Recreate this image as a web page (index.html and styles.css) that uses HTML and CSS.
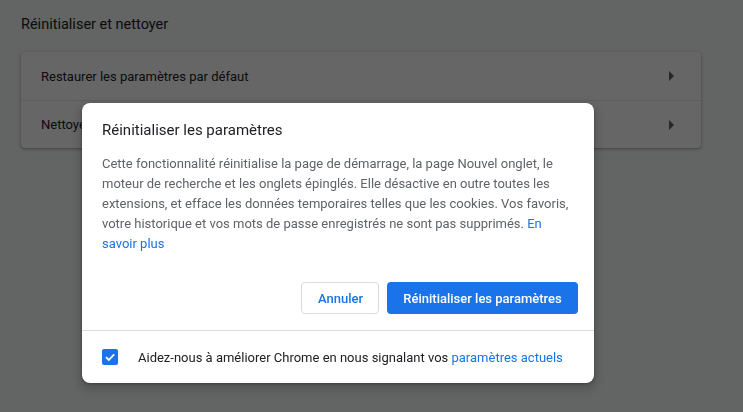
FILE: index.html
```html
<!DOCTYPE html>
<html lang="fr">
<head>
<meta charset="utf-8">
<link rel="stylesheet" href="styles.css">
</head>
<body>
<div class="page">
  <h2 class="section-title">Réinitialiser et nettoyer</h2>
  <div class="card">
    <div class="row"><span>Restaurer les paramètres par défaut</span><span class="arrow"></span></div>
    <div class="row"><span>Nettoyer l'ordinateur</span><span class="arrow"></span></div>
  </div>
</div>
<div class="scrim"></div>
<div class="dialog">
  <div class="dialog-title">Réinitialiser les paramètres</div>
  <div class="dialog-body">Cette fonctionnalité réinitialise la page de démarrage, la page Nouvel onglet, le moteur de recherche et les onglets épinglés. Elle désactive en outre toutes les extensions, et efface les données temporaires telles que les cookies. Vos favoris, votre historique et vos mots de passe enregistrés ne sont pas supprimés. <a class="link" href="#">En savoir plus</a></div>
  <div class="actions">
    <button class="btn btn-cancel">Annuler</button>
    <button class="btn btn-primary">Réinitialiser les paramètres</button>
  </div>
  <div class="footer">
    <span class="checkbox"><svg width="12" height="12" viewBox="0 0 12 12"><path d="M2 6.2 L4.8 9 L10.2 3.4" fill="none" stroke="#fff" stroke-width="1.8"/></svg></span>
    <span class="footer-text">Aidez-nous à améliorer Chrome en nous signalant vos <a class="link" href="#">paramètres actuels</a></span>
  </div>
</div>
</body>
</html>
```
FILE: styles.css
```css
html, body {
  margin: 0;
  padding: 0;
  width: 743px;
  height: 412px;
  overflow: hidden;
  font-family: Roboto, "Liberation Sans", sans-serif;
  background: #f8f9fa;
}
.page {
  padding: 16px 42px 0 21px;
}
.section-title {
  margin: 0 0 18px 0;
  font-size: 14.5px;
  font-weight: 400;
  color: #202124;
  line-height: 18px;
}
.card {
  background: #fff;
  border-radius: 4px;
  box-shadow: 0 1px 2px rgba(60,64,67,0.3), 0 1px 3px 1px rgba(60,64,67,0.15);
  width: 680px;
}
.row {
  height: 48px;
  display: flex;
  align-items: center;
  justify-content: space-between;
  padding: 0 27px 0 20px;
  font-size: 13px;
  color: #202124;
}
.row + .row {
  border-top: 1px solid #e8eaed;
  height: 47px;
}
.arrow {
  width: 0;
  height: 0;
  border-top: 5px solid transparent;
  border-bottom: 5px solid transparent;
  border-left: 5px solid #5f6368;
}
.scrim {
  position: fixed;
  inset: 0;
  background: rgba(0,0,0,0.6);
}
.dialog {
  position: absolute;
  left: 82px;
  top: 103px;
  width: 512px;
  background: #fff;
  border-radius: 8px;
  box-shadow: 0 4px 8px 3px rgba(0,0,0,0.15), 0 1px 3px rgba(0,0,0,0.3);
  box-sizing: border-box;
}
.dialog-title {
  padding: 17px 20px 0 20px;
  font-size: 15px;
  color: #202124;
  line-height: 20px;
}
.dialog-body {
  padding: 14px 20px 0 20px;
  font-size: 13px;
  line-height: 20px;
  color: #5f6368;
}
.link {
  color: #1a73e8;
  text-decoration: none;
}
.actions {
  display: flex;
  justify-content: flex-end;
  gap: 8px;
  padding: 28px 16px 16px 16px;
  border-bottom: 1px solid #dadce0;
}
.btn {
  height: 32px;
  box-sizing: border-box;
  font-family: Roboto, "Liberation Sans", sans-serif;
  font-size: 13px;
  font-weight: 500;
  border-radius: 4px;
  padding: 0 16px;
  cursor: pointer;
}
.btn-cancel {
  background: #fff;
  color: #1a73e8;
  border: 1px solid #dadce0;
  width: 78px;
}
.btn-primary {
  background: #1a73e8;
  color: #fff;
  border: none;
  width: 191px;
}
.footer {
  display: flex;
  align-items: center;
  height: 52px;
  padding: 0 20px;
}
.checkbox {
  width: 16px;
  height: 16px;
  border-radius: 2px;
  background: #1a73e8;
  display: flex;
  align-items: center;
  justify-content: center;
  margin-right: 20px;
  flex: none;
}
.footer-text {
  font-size: 13px;
  color: #202124;
}
```
